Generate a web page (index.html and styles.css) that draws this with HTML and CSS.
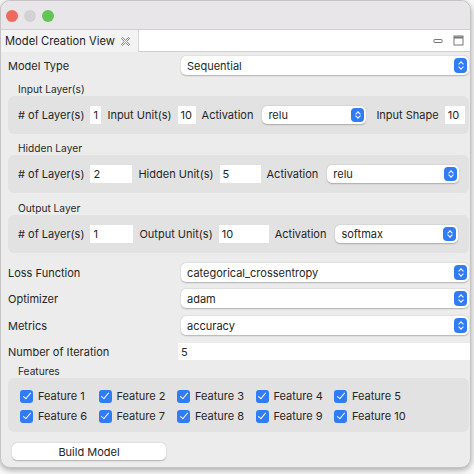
FILE: index.html
```html
<!DOCTYPE html>
<html lang="en">
<head>
    <meta charset="UTF-8">
    <meta name="viewport" content="width=device-width, initial-scale=1.0">
    <title>Model Creation View</title>
    <link rel="stylesheet" href="styles.css">
</head>
<body>
    <div class="window">
        <div class="titlebar">
            <span class="light light-red"></span>
            <span class="light light-gray"></span>
            <span class="light light-green"></span>
        </div>

        <div class="tabbar">
            <div class="tab">
                Model Creation View
                <svg class="tab-close" width="9" height="9" viewBox="0 0 9 9">
                    <path d="M0.5 1.5 L1.5 0.5 L4.5 3.3 L7.5 0.5 L8.5 1.5 L5.7 4.5 L8.5 7.5 L7.5 8.5 L4.5 5.7 L1.5 8.5 L0.5 7.5 L3.3 4.5 Z" fill="#fff" stroke="#666" stroke-width="0.8"/>
                </svg>
            </div>
            <div class="tab-rest">
                <svg width="10" height="6" viewBox="0 0 10 6">
                    <rect x="1" y="1.5" width="8" height="3" rx="0.5" fill="#fff" stroke="#777" stroke-width="1"/>
                </svg>
                <svg width="11" height="11" viewBox="0 0 11 11">
                    <rect x="1" y="1" width="9" height="9" fill="#fff" stroke="#777" stroke-width="1"/>
                    <line x1="1" y1="2.5" x2="10" y2="2.5" stroke="#777" stroke-width="2"/>
                </svg>
            </div>
        </div>

        <div class="content">
            <div class="form-row first">
                <span class="row-label">Model Type</span>
                <div class="select select-wide">Sequential<span class="stepper"></span></div>
            </div>

            <div class="group-title">Input Layer(s)</div>
            <div class="group">
                <div class="group-row">
                    <span>#&nbsp;of Layer(s)</span>
                    <span class="field" style="width: 11px">1</span>
                    <span>Input Unit(s)</span>
                    <span class="field" style="width: 18px">10</span>
                    <span>Activation</span>
                    <div class="select select-inline" style="width: 104px">relu<span class="stepper"></span></div>
                    <span>Input Shape</span>
                    <span class="field" style="width: 20px">10</span>
                </div>
            </div>

            <div class="group-title">Hidden Layer</div>
            <div class="group">
                <div class="group-row">
                    <span>#&nbsp;of Layer(s)</span>
                    <span class="field" style="width: 42px">2</span>
                    <span>Hidden Unit(s)</span>
                    <span class="field" style="width: 41px">5</span>
                    <span>Activation</span>
                    <div class="select select-inline" style="width: 132px">relu<span class="stepper"></span></div>
                </div>
            </div>

            <div class="group-title output-title">Output Layer</div>
            <div class="group">
                <div class="group-row">
                    <span>#&nbsp;of Layer(s)</span>
                    <span class="field" style="width: 43px">1</span>
                    <span>Output Unit(s)</span>
                    <span class="field" style="width: 50px">10</span>
                    <span>Activation</span>
                    <div class="select select-inline" style="width: 123px">softmax<span class="stepper"></span></div>
                </div>
            </div>

            <div class="form-row loss">
                <span class="row-label">Loss Function</span>
                <div class="select select-wide">categorical_crossentropy<span class="stepper"></span></div>
            </div>
            <div class="form-row optimizer">
                <span class="row-label">Optimizer</span>
                <div class="select select-wide">adam<span class="stepper"></span></div>
            </div>
            <div class="form-row metrics">
                <span class="row-label">Metrics</span>
                <div class="select select-wide">accuracy<span class="stepper"></span></div>
            </div>
            <div class="form-row iteration">
                <span class="row-label">Number of Iteration</span>
                <span class="field field-wide">5</span>
            </div>

            <div class="group-title features-title">Features</div>
            <div class="group features">
                <label class="check"><span class="box"></span>Feature 1</label>
                <label class="check"><span class="box"></span>Feature 2</label>
                <label class="check"><span class="box"></span>Feature 3</label>
                <label class="check"><span class="box"></span>Feature 4</label>
                <label class="check"><span class="box"></span>Feature 5</label>
                <label class="check"><span class="box"></span>Feature 6</label>
                <label class="check"><span class="box"></span>Feature 7</label>
                <label class="check"><span class="box"></span>Feature 8</label>
                <label class="check"><span class="box"></span>Feature 9</label>
                <label class="check"><span class="box"></span>Feature 10</label>
            </div>

            <button class="btn">Build Model</button>
        </div>
    </div>
</body>
</html>
```

FILE: styles.css
```css
* {
    margin: 0;
    padding: 0;
    box-sizing: border-box;
}

body {
    font-family: Inter, 'Liberation Sans', sans-serif;
    font-size: 11px;
    color: #262626;
    background: #fafafa;
    width: 474px;
    height: 474px;
    overflow: hidden;
}

.window {
    width: 471px;
    height: 468px;
    background: #ececec;
    border: 1px solid #c4c4c4;
    border-radius: 10px;
    box-shadow: 0 2px 6px rgba(0,0,0,0.35);
    overflow: hidden;
}

/* title bar */
.titlebar {
    height: 28px;
    background: #e8e6e8;
    display: flex;
    align-items: center;
    gap: 6px;
    padding-left: 5px;
    padding-top: 2px;
}

.light {
    width: 12px;
    height: 12px;
    border-radius: 50%;
}

.light-red {
    background: #ee6a5f;
}

.light-gray {
    background: #d3d1d3;
}

.light-green {
    background: #62c554;
}

/* tab bar */
.tabbar {
    height: 23px;
    display: flex;
    border-top: 1px solid #cfcfcf;
}

.tab {
    width: 137px;
    background: #f3f3f3;
    font-size: 11.2px;
    display: flex;
    align-items: center;
    padding-left: 4px;
    gap: 6px;
    color: #1e1e1e;
}

.tab-close {
    margin-top: 1px;
}

.tab-rest {
    flex: 1;
    background: #fff;
    border-bottom: 1px solid #cfcfcf;
    border-left: 1px solid #d6d6d6;
    display: flex;
    align-items: center;
    justify-content: flex-end;
    gap: 10px;
    padding-right: 6px;
}

/* content */
.content {
    padding-left: 7px;
    padding-right: 1px;
}

.form-row {
    display: flex;
    align-items: center;
    height: 19px;
}

.form-row.first {
    margin-top: 4px;
}

.form-row.loss {
    margin-top: 10px;
}

.form-row.optimizer {
    margin-top: 7px;
}

.form-row.metrics {
    margin-top: 8px;
}

.form-row.iteration {
    margin-top: 8px;
    height: 17px;
}

.row-label {
    width: 173px;
    flex-shrink: 0;
}

.select {
    position: relative;
    height: 19px;
    background: #fff;
    border-radius: 5px;
    box-shadow: 0 0.5px 1.5px rgba(0,0,0,0.25);
    padding-left: 6px;
    display: flex;
    align-items: center;
}

.select-wide {
    width: 289px;
}

.select-inline {
    height: 18px;
    flex-shrink: 0;
}

.stepper {
    position: absolute;
    right: 2px;
    top: 2px;
    width: 13px;
    height: calc(100% - 4px);
    border-radius: 4px;
    background: #2f7cf6;
}

.stepper::before,
.stepper::after {
    content: "";
    position: absolute;
    left: 4.5px;
    width: 3px;
    height: 3px;
    border-left: 1.3px solid #fff;
    border-top: 1.3px solid #fff;
}

.stepper::before {
    top: 4px;
    transform: rotate(45deg);
}

.stepper::after {
    bottom: 4px;
    transform: rotate(225deg);
}

.field {
    height: 18px;
    background: #fff;
    display: flex;
    align-items: center;
    padding-left: 3px;
    flex-shrink: 0;
}

.field-wide {
    width: 294px;
    height: 17px;
    margin-left: -3px;
}

/* groups */
.group-title {
    height: 21px;
    padding-top: 7px;
    padding-left: 10px;
    font-size: 10.2px;
    line-height: 14px;
    color: #2a2a2a;
}

.output-title {
    height: 22px;
    padding-top: 8px;
}

.group {
    background: #e2e2e2;
    border-radius: 6px;
    height: 38px;
    display: flex;
    align-items: center;
}

.group-row {
    display: flex;
    align-items: center;
    gap: 6px;
    padding-left: 10px;
    white-space: nowrap;
}

.group-row .select-inline {
    margin-left: 3px;
    margin-right: 4px;
}

.features-title {
    height: 18px;
    padding-top: 4px;
}

.group.features {
    height: 54px;
    display: grid;
    grid-template-columns: repeat(5, 78.5px);
    grid-auto-rows: 20px;
    align-content: start;
    padding: 8px 0 0 12px;
}

.check {
    display: flex;
    align-items: center;
    gap: 5px;
    white-space: nowrap;
}

.box {
    position: relative;
    width: 13px;
    height: 13px;
    border-radius: 3px;
    background: #2f7cf6;
}

.box::after {
    content: "";
    position: absolute;
    left: 4.5px;
    top: 1.5px;
    width: 3px;
    height: 7px;
    border-right: 1.8px solid #fff;
    border-bottom: 1.8px solid #fff;
    transform: rotate(40deg);
}

.btn {
    display: block;
    margin: 11px 0 0 4px;
    width: 154px;
    height: 17px;
    background: #fff;
    border: none;
    border-radius: 5px;
    box-shadow: 0 0.5px 1.5px rgba(0,0,0,0.25);
    font-family: inherit;
    font-size: 11px;
    color: #262626;
}
```
